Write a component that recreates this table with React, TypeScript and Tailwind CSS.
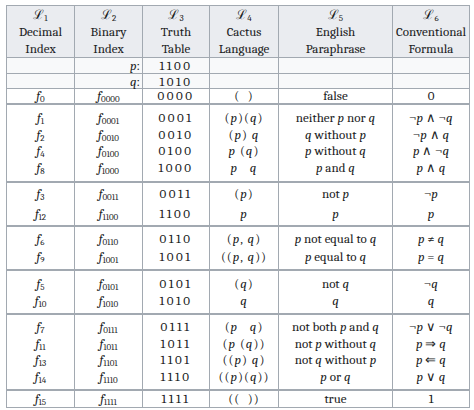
import type { ReactNode } from "react";

const P = () => <i>p</i>;
const Q = () => <i>q</i>;

const f = (n: string) => (
  <>
    <i>f</i>
    <sub className="text-[9px]">{n}</sub>
  </>
);

type Group = {
  h: string;
  lead: string;
  thick: boolean;
  cols: ReactNode[][];
};

const groups: Group[] = [
  {
    h: "h-[14px]",
    lead: "leading-[14px]",
    thick: false,
    cols: [[f("0")], [f("0000")], ["0000"], ["(  )"], ["false"], ["0"]],
  },
  {
    h: "h-[78px]",
    lead: "leading-[16.5px]",
    thick: true,
    cols: [
      [f("1"), f("2"), f("4"), f("8")],
      [f("0001"), f("0010"), f("0100"), f("1000")],
      ["0001", "0010", "0100", "1000"],
      [
        <>(<P />)(<Q />)</>,
        <>(<P />) <Q /></>,
        <><P /> (<Q />)</>,
        <><P />   <Q /></>,
      ],
      [
        <>neither <P /> nor <Q /></>,
        <><Q /> without <P /></>,
        <><P /> without <Q /></>,
        <><P /> and <Q /></>,
      ],
      [
        <>¬<P /> ∧ ¬<Q /></>,
        <>¬<P /> ∧ <Q /></>,
        <><P /> ∧ ¬<Q /></>,
        <><P /> ∧ <Q /></>,
      ],
    ],
  },
  {
    h: "h-[44px]",
    lead: "leading-[20px]",
    thick: true,
    cols: [
      [f("3"), f("12")],
      [f("0011"), f("1100")],
      ["0011", "1100"],
      [<>(<P />)</>, <P />],
      [<>not <P /></>, <P />],
      [<>¬<P /></>, <P />],
    ],
  },
  {
    h: "h-[44px]",
    lead: "leading-[18px]",
    thick: true,
    cols: [
      [f("6"), f("9")],
      [f("0110"), f("1001")],
      ["0110", "1001"],
      [<>(<P />, <Q />)</>, <>((<P />, <Q />))</>],
      [<><P /> not equal to <Q /></>, <><P /> equal to <Q /></>],
      [<><P /> ≠ <Q /></>, <><P /> = <Q /></>],
    ],
  },
  {
    h: "h-[44px]",
    lead: "leading-[17px]",
    thick: true,
    cols: [
      [f("5"), f("10")],
      [f("0101"), f("1010")],
      ["0101", "1010"],
      [<>(<Q />)</>, <Q />],
      [<>not <Q /></>, <Q />],
      [<>¬<Q /></>, <Q />],
    ],
  },
  {
    h: "h-[76px]",
    lead: "leading-[16.5px]",
    thick: true,
    cols: [
      [f("7"), f("11"), f("13"), f("14")],
      [f("0111"), f("1011"), f("1101"), f("1110")],
      ["0111", "1011", "1101", "1110"],
      [
        <>(<P />   <Q />)</>,
        <>(<P /> (<Q />))</>,
        <>((<P />) <Q />)</>,
        <>((<P />)(<Q />))</>,
      ],
      [
        <>not both <P /> and <Q /></>,
        <>not <P /> without <Q /></>,
        <>not <Q /> without <P /></>,
        <><P /> or <Q /></>,
      ],
      [
        <>¬<P /> ∨ ¬<Q /></>,
        <><P /> ⇒ <Q /></>,
        <><P /> ⇐ <Q /></>,
        <><P /> ∨ <Q /></>,
      ],
    ],
  },
  {
    h: "h-[16px]",
    lead: "leading-[16px]",
    thick: true,
    cols: [[f("15")], [f("1111")], ["1111"], ["((  ))"], ["true"], ["1"]],
  },
];

const headers: [string, string, string][] = [
  ["1", "Decimal", "Index"],
  ["2", "Binary", "Index"],
  ["3", "Truth", "Table"],
  ["4", "Cactus", "Language"],
  ["5", "English", "Paraphrase"],
  ["6", "Conventional", "Formula"],
];

const cell = "border border-[#a2a9b1] p-0 text-center align-middle";

export default function App() {
  return (
    <div className="min-h-[410px] bg-white pl-[6px] pt-[5px] font-serif text-[13px] text-[#202122]">
      <table className="w-[463px] table-fixed border-collapse">
        <colgroup>
          <col className="w-[68px]" />
          <col className="w-[68px]" />
          <col className="w-[67px]" />
          <col className="w-[69px]" />
          <col className="w-[114px]" />
          <col className="w-[77px]" />
        </colgroup>
        <thead>
          <tr className="bg-[#eaecf0]">
            {headers.map(([n, a, b]) => (
              <th key={n} className={`${cell} h-[52px] font-normal leading-[17px]`}>
                <div>
                  <span className="text-[13px]">ℒ</span>
                  <sub className="text-[9px]">{n}</sub>
                </div>
                <div>{a}</div>
                <div>{b}</div>
              </th>
            ))}
          </tr>
        </thead>
        <tbody>
          {["p", "q"].map((v) => (
            <tr key={v} className="bg-[#f8f9fa]">
              <td className={`${cell} ${v === "p" ? "h-[16px]" : "h-[15px]"}`}></td>
              <td className={`${cell} pr-[2px] text-right leading-[13px]`}>
                <i>{v}</i>:
              </td>
              <td className={`${cell} leading-[13px] tracking-[2.5px]`}>{v === "p" ? "1100" : "1010"}</td>
              <td className={cell}></td>
              <td className={cell}></td>
              <td className={cell}></td>
            </tr>
          ))}
          {groups.map((g, gi) => (
            <tr key={gi}>
              {g.cols.map((lines, ci) => (
                <td
                  key={ci}
                  className={`${cell} ${g.h} ${g.lead} ${g.thick ? "border-t-2" : ""} ${
                    ci === 2 ? "tracking-[2.5px]" : ""
                  } ${ci === 3 ? "whitespace-pre tracking-[1px]" : ""}`}
                >
                  {lines.map((l, li) => (
                    <div key={li}>{l}</div>
                  ))}
                </td>
              ))}
            </tr>
          ))}
        </tbody>
      </table>
    </div>
  );
}
